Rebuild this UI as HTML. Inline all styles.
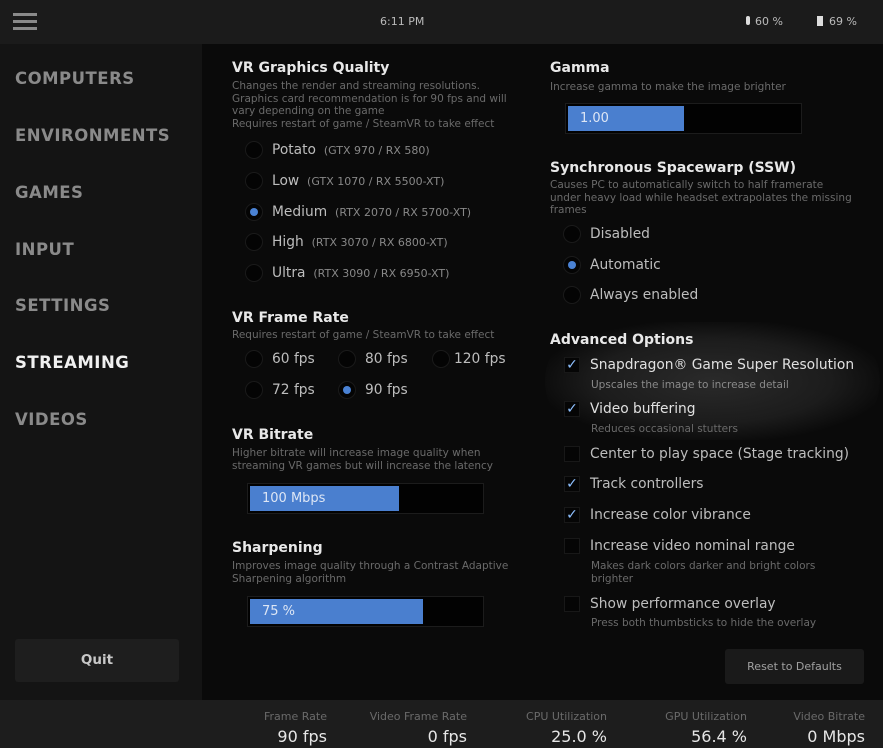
<!DOCTYPE html>
<html><head><meta charset="utf-8"><style>
*{margin:0;padding:0;box-sizing:border-box}
body{width:883px;height:748px;background:#0a0a0a;font-family:"DejaVu Sans","Liberation Sans",sans-serif;color:#c8c8c8;position:relative;overflow:hidden}
.a{position:absolute;white-space:nowrap}
.top{left:0;top:0;width:883px;height:44px;background:#1b1b1b}
.side{left:0;top:44px;width:202px;height:656px;background:#141414}
.bot{left:0;top:700px;width:883px;height:48px;background:#1d1d1d}
.nav{left:15px;font-weight:bold;font-size:16.5px;color:#8a8a8a;letter-spacing:0.5px}
.h{font-weight:bold;font-size:14px;color:#e8e8e8}
.d{font-size:10.5px;color:#6a6a6a;line-height:12.5px}
.r{width:18px;height:18px;border-radius:50%;background:#040404;border:1px solid #1a1a1a}
.r.on::after{content:"";position:absolute;left:4px;top:4px;width:8px;height:8px;border-radius:50%;background:#4a82d4}
.l{font-size:13.8px;color:#bdbdbd}
.g{font-size:11px;color:#888}
.bar{height:31px;background:#020202;border:1px solid #1c1c1c}
.fill{position:absolute;left:2px;top:2px;bottom:2px;background:#4a7fcf;color:#dde6f5;font-size:13px;padding-left:12px;line-height:25px}
.cb{width:16px;height:16px;background:#050505;border:1px solid #181818;color:#8ec0ff;font-size:14px;line-height:14px;text-align:center;font-weight:bold}
.sl{font-size:11px;color:#6a6a6a;text-align:right}
.sv{font-size:16px;color:#e6e6e6;text-align:right}
</style></head><body>
<div class="a top"></div>
<div class="a side"></div>
<div class="a bot"></div>
<div class="a" style="left:13px;top:13px;width:24px;height:3px;background:#8a8a8a"></div>
<div class="a" style="left:13px;top:20px;width:24px;height:3px;background:#8a8a8a"></div>
<div class="a" style="left:13px;top:27px;width:24px;height:3px;background:#8a8a8a"></div>
<div class="a" style="left:380px;top:15px;font-size:11px;color:#bbb">6:11 PM</div>
<div class="a" style="left:746px;top:16px;width:4px;height:9px;background:#ddd;border-radius:2px"></div>
<div class="a" style="left:755px;top:15px;font-size:11px;color:#bbb">60 %</div>
<div class="a" style="left:817px;top:16px;width:6px;height:10px;background:#ddd"></div>
<div class="a" style="left:829px;top:15px;font-size:11px;color:#bbb">69 %</div>

<div class="a nav" style="top:69px">COMPUTERS</div>
<div class="a nav" style="top:126px">ENVIRONMENTS</div>
<div class="a nav" style="top:183px">GAMES</div>
<div class="a nav" style="top:240px">INPUT</div>
<div class="a nav" style="top:296px">SETTINGS</div>
<div class="a nav" style="top:353px;color:#f0f0f0">STREAMING</div>
<div class="a nav" style="top:410px">VIDEOS</div>
<div class="a" style="left:15px;top:639px;width:164px;height:43px;background:#1e1e1e;border-radius:3px;color:#c8c8c8;font-size:13.5px;font-weight:bold;text-align:center;line-height:43px">Quit</div>

<div class="a h" style="left:232px;top:60px">VR Graphics Quality</div>
<div class="a d" style="left:232px;top:80px">Changes the render and streaming resolutions.<br>Graphics card recommendation is for 90 fps and will<br>vary depending on the game<br>Requires restart of game / SteamVR to take effect</div>
<div class="a r" style="left:245px;top:141px"></div><div class="a l" style="left:272px;top:142px">Potato <span class="g">&nbsp;(GTX 970 / RX 580)</span></div>
<div class="a r" style="left:245px;top:172px"></div><div class="a l" style="left:272px;top:173px">Low <span class="g">&nbsp;(GTX 1070 / RX 5500-XT)</span></div>
<div class="a r on" style="left:245px;top:203px"></div><div class="a l" style="left:272px;top:204px">Medium <span class="g">&nbsp;(RTX 2070 / RX 5700-XT)</span></div>
<div class="a r" style="left:245px;top:233px"></div><div class="a l" style="left:272px;top:234px">High <span class="g">&nbsp;(RTX 3070 / RX 6800-XT)</span></div>
<div class="a r" style="left:245px;top:264px"></div><div class="a l" style="left:272px;top:265px">Ultra <span class="g">&nbsp;(RTX 3090 / RX 6950-XT)</span></div>

<div class="a h" style="left:232px;top:310px">VR Frame Rate</div>
<div class="a d" style="left:232px;top:329px">Requires restart of game / SteamVR to take effect</div>
<div class="a r" style="left:245px;top:350px"></div><div class="a l" style="left:272px;top:351px">60 fps</div>
<div class="a r" style="left:338px;top:350px"></div><div class="a l" style="left:365px;top:351px">80 fps</div>
<div class="a r" style="left:432px;top:350px"></div><div class="a l" style="left:454px;top:351px">120 fps</div>
<div class="a r" style="left:245px;top:381px"></div><div class="a l" style="left:272px;top:382px">72 fps</div>
<div class="a r on" style="left:338px;top:381px"></div><div class="a l" style="left:365px;top:382px">90 fps</div>

<div class="a h" style="left:232px;top:427px">VR Bitrate</div>
<div class="a d" style="left:232px;top:447px">Higher bitrate will increase image quality when<br>streaming VR games but will increase the latency</div>
<div class="a bar" style="left:247px;top:483px;width:237px"><div class="fill" style="width:149px">100 Mbps</div></div>

<div class="a h" style="left:232px;top:540px">Sharpening</div>
<div class="a d" style="left:232px;top:560px">Improves image quality through a Contrast Adaptive<br>Sharpening algorithm</div>
<div class="a bar" style="left:247px;top:596px;width:237px"><div class="fill" style="width:173px">75 %</div></div>

<div class="a h" style="left:550px;top:60px">Gamma</div>
<div class="a d" style="left:550px;top:81px">Increase gamma to make the image brighter</div>
<div class="a bar" style="left:565px;top:103px;width:237px"><div class="fill" style="width:116px">1.00</div></div>

<div class="a h" style="left:550px;top:160px">Synchronous Spacewarp (SSW)</div>
<div class="a d" style="left:550px;top:179px">Causes PC to automatically switch to half framerate<br>under heavy load while headset extrapolates the missing<br>frames</div>
<div class="a r" style="left:563px;top:225px"></div><div class="a l" style="left:590px;top:226px">Disabled</div>
<div class="a r on" style="left:563px;top:256px"></div><div class="a l" style="left:590px;top:257px">Automatic</div>
<div class="a r" style="left:563px;top:286px"></div><div class="a l" style="left:590px;top:287px">Always enabled</div>

<div class="a" style="left:545px;top:322px;width:335px;height:118px;border-radius:60px;background:radial-gradient(ellipse at center,#2a2a2a 0%,#1c1c1c 50%,rgba(10,10,10,0) 75%)"></div>
<div class="a h" style="left:550px;top:332px">Advanced Options</div>
<div class="a cb" style="left:564px;top:357px">✓</div><div class="a l" style="left:590px;top:357px;color:#e0e0e0">Snapdragon® Game Super Resolution</div>
<div class="a d" style="left:591px;top:379px;color:#8a8a8a">Upscales the image to increase detail</div>
<div class="a cb" style="left:564px;top:401px">✓</div><div class="a l" style="left:590px;top:401px;color:#e0e0e0">Video buffering</div>
<div class="a d" style="left:591px;top:423px">Reduces occasional stutters</div>
<div class="a cb" style="left:564px;top:446px"></div><div class="a l" style="left:590px;top:446px">Center to play space (Stage tracking)</div>
<div class="a cb" style="left:564px;top:476px">✓</div><div class="a l" style="left:590px;top:476px">Track controllers</div>
<div class="a cb" style="left:564px;top:507px">✓</div><div class="a l" style="left:590px;top:507px">Increase color vibrance</div>
<div class="a cb" style="left:564px;top:538px"></div><div class="a l" style="left:590px;top:538px">Increase video nominal range</div>
<div class="a d" style="left:591px;top:560px">Makes dark colors darker and bright colors<br>brighter</div>
<div class="a cb" style="left:564px;top:596px"></div><div class="a l" style="left:590px;top:596px">Show performance overlay</div>
<div class="a d" style="left:591px;top:617px">Press both thumbsticks to hide the overlay</div>
<div class="a" style="left:725px;top:649px;width:139px;height:35px;background:#1a1a1a;border-radius:3px;font-size:11px;color:#a0a0a0;text-align:center;line-height:35px">Reset to Defaults</div>

<div class="a sl" style="right:556px;top:710px">Frame Rate</div>
<div class="a sv" style="right:556px;top:727px">90 fps</div>
<div class="a sl" style="right:416px;top:710px">Video Frame Rate</div>
<div class="a sv" style="right:416px;top:727px">0 fps</div>
<div class="a sl" style="right:276px;top:710px">CPU Utilization</div>
<div class="a sv" style="right:276px;top:727px">25.0 %</div>
<div class="a sl" style="right:136px;top:710px">GPU Utilization</div>
<div class="a sv" style="right:136px;top:727px">56.4 %</div>
<div class="a sl" style="right:18px;top:710px">Video Bitrate</div>
<div class="a sv" style="right:18px;top:727px">0 Mbps</div>
</body></html>
